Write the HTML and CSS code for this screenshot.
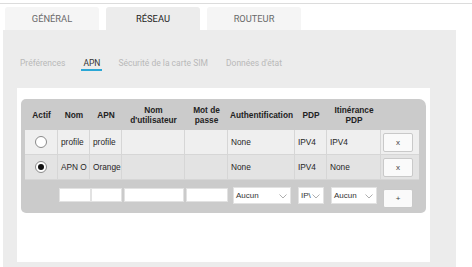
FILE: index.html
```html
<!DOCTYPE html>
<html lang="fr">
<head>
    <meta charset="UTF-8">
    <title>Réseau - APN</title>
    <link rel="stylesheet" href="styles.css">
</head>
<body>
    <div class="topline"></div>
    <div class="tabs">
        <div class="tab">GÉNÉRAL</div>
        <div class="tab active">RÉSEAU</div>
        <div class="tab">ROUTEUR</div>
    </div>
    <div class="panel">
        <div class="subnav">
            <span class="sub_item">Préférences</span>
            <span class="sub_item current">APN</span>
            <span class="sub_item">Sécurité de la carte SIM</span>
            <span class="sub_item">Données d'état</span>
        </div>
        <div class="content">
            <div class="apn_table">
                <div class="row head">
                    <div>Actif</div>
                    <div>Nom</div>
                    <div>APN</div>
                    <div>Nom<br>d'utilisateur</div>
                    <div>Mot de<br>passe</div>
                    <div>Authentification</div>
                    <div>PDP</div>
                    <div>Itinérance<br>PDP</div>
                    <div></div>
                </div>
                <div class="row data light">
                    <div class="c_radio"><span class="radio"></span></div>
                    <div>profile</div>
                    <div>profile</div>
                    <div></div>
                    <div></div>
                    <div>None</div>
                    <div>IPV4</div>
                    <div>IPV4</div>
                    <div class="c_btn"><button class="btn">x</button></div>
                </div>
                <div class="row data dark">
                    <div class="c_radio"><span class="radio checked"></span></div>
                    <div>APN O</div>
                    <div>Orange</div>
                    <div></div>
                    <div></div>
                    <div>None</div>
                    <div>IPV4</div>
                    <div>None</div>
                    <div class="c_btn"><button class="btn">x</button></div>
                </div>
                <div class="row new">
                    <div></div>
                    <div><span class="field w_nom"></span></div>
                    <div><span class="field w_apn"></span></div>
                    <div><span class="field w_user"></span></div>
                    <div><span class="field w_pass"></span></div>
                    <div><span class="field sel w_auth">Aucun<svg class="chev" viewBox="0 0 8 5"><polyline points="0.5,0.5 4,4 7.5,0.5"/></svg></span></div>
                    <div><span class="field sel w_pdp">IP\<svg class="chev" viewBox="0 0 8 5"><polyline points="0.5,0.5 4,4 7.5,0.5"/></svg></span></div>
                    <div><span class="field sel w_itin">Aucun<svg class="chev" viewBox="0 0 8 5"><polyline points="0.5,0.5 4,4 7.5,0.5"/></svg></span></div>
                    <div class="c_btn"><button class="btn plus">+</button></div>
                </div>
            </div>
        </div>
    </div>
</body>
</html>
```

FILE: styles.css
```css
body {
    margin: 0;
    padding: 0;
    font-family: Roboto, "Liberation Sans", sans-serif;
    background: #ffffff;
    width: 472px;
    height: 267px;
    overflow: hidden;
}

.topline {
    height: 3px;
    border-bottom: 1px solid #dcdcdc;
}

.tabs {
    display: flex;
    gap: 7px;
    margin-top: 3px;
    padding-left: 5px;
}

.tab {
    width: 94px;
    height: 23px;
    background: #f5f5f5;
    border-radius: 3px 3px 0 0;
    display: flex;
    align-items: center;
    justify-content: center;
    font-size: 9.3px;
    color: #6a6a6a;
}

.tab.active {
    background: #ececec;
    color: #1e1e1e;
}

.panel {
    margin-left: 3px;
    width: 453px;
    height: 237px;
    background: #ececec;
}

.subnav {
    display: flex;
    height: 58px;
    box-sizing: border-box;
    padding: 28px 0 0 15px;
    gap: 14px;
}

.sub_item {
    font-size: 8.5px;
    line-height: 11px;
    height: 11px;
    color: #b9b9b9;
    padding: 0 2px;
}

.sub_item.current {
    color: #333333;
    border-bottom: 2px solid #2aa7d6;
}

.content {
    margin-left: 14px;
    width: 413px;
    height: 174px;
    background: #ffffff;
    box-sizing: border-box;
    padding: 11px 0 0 4px;
}

.apn_table {
    width: 405px;
    height: 114px;
    background: #cbcbcb;
    border-radius: 5px 7px 5px 5px;
    box-sizing: border-box;
    padding: 0 7px 0 4px;
    font-family: "Liberation Sans", Arial, sans-serif;
    color: #222222;
}

.row {
    display: grid;
    grid-template-columns: 33px 32px 32px 63px 43px 67px 32px 54px 38px;
}

.head {
    height: 31px;
    font-size: 8.3px;
    font-weight: bold;
    line-height: 10px;
}

.head div {
    display: flex;
    align-items: center;
    justify-content: center;
    text-align: center;
}

.data div {
    height: 24px;
    border-right: 1px solid #d6d6d6;
    border-bottom: 1px solid #d6d6d6;
    display: flex;
    align-items: center;
    padding-left: 3px;
    font-size: 8.3px;
    color: #262626;
    overflow: hidden;
    white-space: nowrap;
}

.data div:last-child {
    border-right: none;
}

.light div {
    background: #efefef;
}

.dark div {
    background: #e3e3e3;
}

.data .c_radio {
    justify-content: center;
    padding-left: 0;
}

.radio {
    width: 10px;
    height: 10px;
    border: 1px solid #8a8a8a;
    border-radius: 50%;
    background: #ffffff;
    position: relative;
}

.radio.checked::after {
    content: '';
    position: absolute;
    top: 2px;
    left: 2px;
    width: 6px;
    height: 6px;
    border-radius: 50%;
    background: #111111;
}

.data .c_btn {
    padding-left: 2px;
}

.btn {
    width: 30px;
    height: 19px;
    padding: 0;
    background: #fafafa;
    border: 1px solid #c9c9c9;
    border-radius: 2px;
    font-family: "Liberation Sans", Arial, sans-serif;
    font-size: 8px;
    color: #444444;
}

.new {
    height: 33px;
}

.new div {
    padding-top: 8px;
}

.new .c_btn {
    padding-top: 7px;
    padding-left: 2px;
}

.field {
    display: flex;
    align-items: center;
    height: 14px;
    background: #ffffff;
    box-sizing: border-box;
    border: 1px solid #e2e2e2;
    font-size: 8px;
    color: #333333;
    padding-left: 2px;
    position: relative;
    overflow: hidden;
    white-space: nowrap;
}

.w_nom { width: 32px; margin-left: 1px; }
.w_apn { width: 31px; margin-left: 1px; }
.w_user { width: 60px; margin-left: 2px; }
.w_pass { width: 42px; margin-left: 1px; }
.w_auth { width: 58px; margin-left: 5px; height: 17px; }
.w_pdp { width: 26px; margin-left: 3px; height: 17px; }
.w_itin { width: 46px; margin-left: 4px; height: 17px; }

.sel {
    margin-top: -1px;
}

.chev {
    position: absolute;
    right: 3px;
    top: 6px;
    width: 8px;
    height: 5px;
    background: #ffffff;
    fill: none;
    stroke: #9a9a9a;
    stroke-width: 0.8;
}
```
